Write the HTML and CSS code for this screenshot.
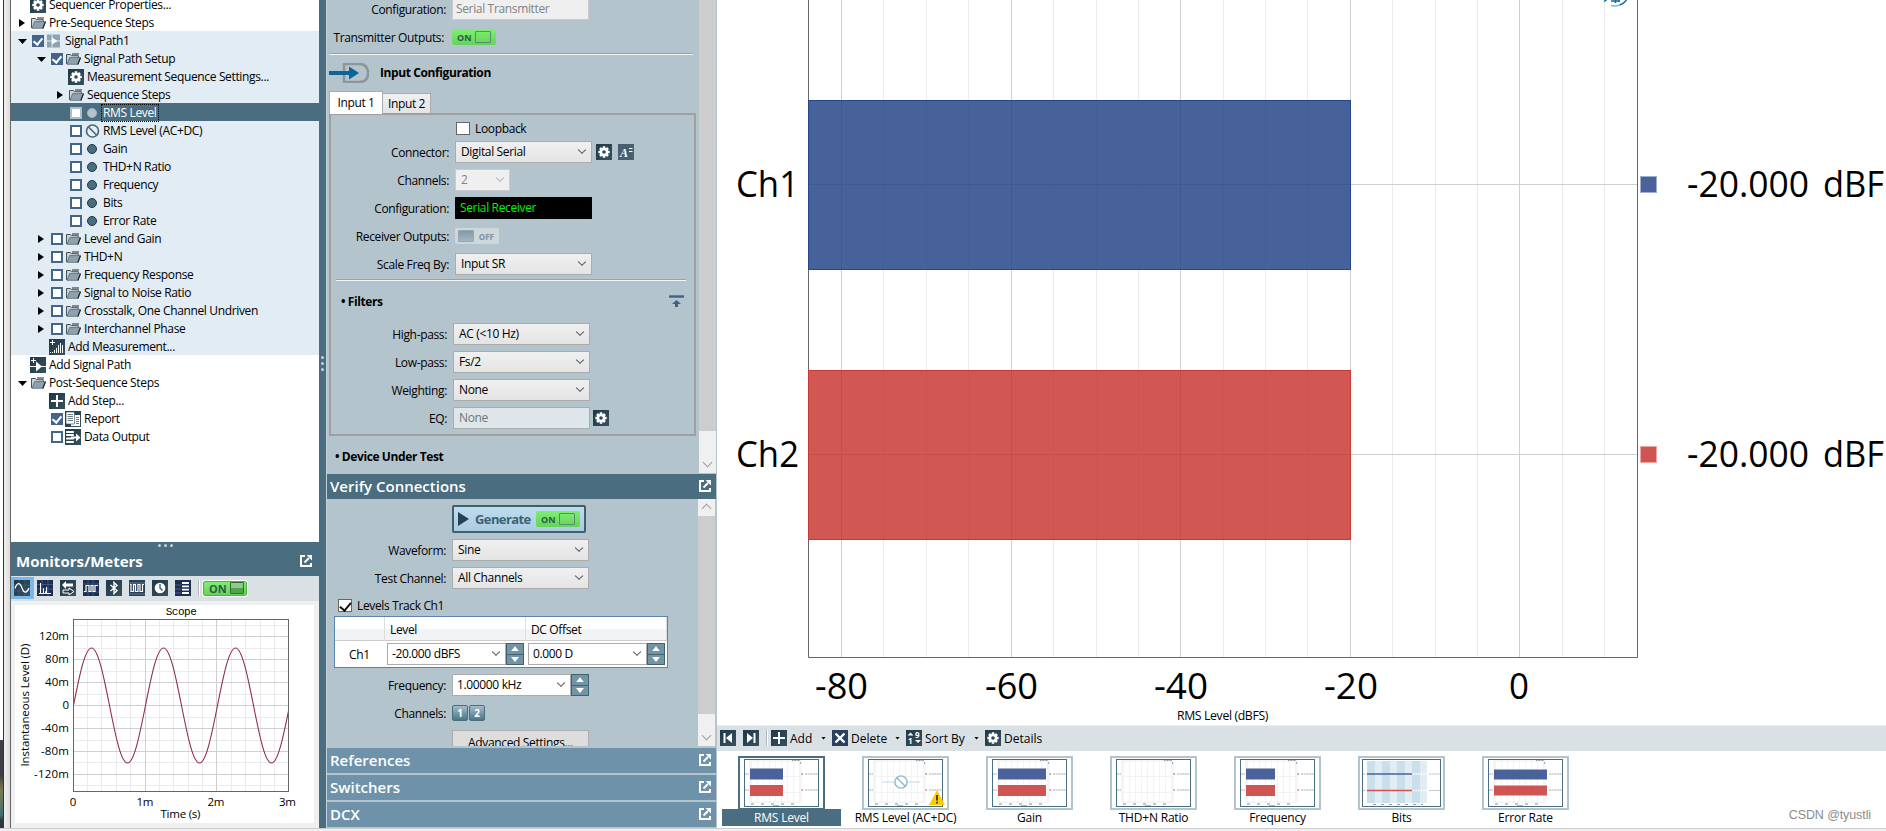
FILE: index.html
```html
<!DOCTYPE html>
<html lang="en">
<head>
    <meta charset="UTF-8">
    <meta name="viewport" content="width=device-width, initial-scale=1.0">
    <title>Sequence Mode - RMS Level</title>
    <link rel="stylesheet" href="styles.css">
</head>
<body>
    <!-- icon sprites -->
    <svg class="sprites" width="0" height="0">
        <linearGradient id="tile" x1="0" y1="0" x2="1" y2="1">
            <stop offset="0" stop-color="#1f3849"/>
            <stop offset="1" stop-color="#38515f"/>
        </linearGradient>
        <symbol id="gear" viewBox="0 0 16 16">
            <rect width="16" height="16" fill="url(#tile)"/>
            <g stroke="#fff" stroke-width="2.6">
                <path d="M8 2.3v11.4M2.3 8h11.4M4 4l8 8M12 4l-8 8"/>
            </g>
            <circle cx="8" cy="8" r="4.3" fill="#fff"/>
            <circle cx="8" cy="8" r="1.8" fill="#2c4656"/>
        </symbol>
        <symbol id="folder" viewBox="0 0 16 16">
            <path d="M1.5 13V3.5h4l1 1.2h6.8V7" fill="#c8d2d8" stroke="#47525a"/>
            <path d="M2 13.3L4.6 6.6h10.9l-2.6 6.7z" fill="#8da1ae" stroke="#5b6b76" stroke-width=".8"/>
            <path d="M7 3h7M12.8 13.5l2.7-6.8" stroke="#222" stroke-width="1.2"/>
        </symbol>
        <symbol id="path" viewBox="0 0 16 16">
            <rect x="1" y="1.5" width="13" height="13" fill="#8ea3b2"/>
            <path d="M1 8h13M6 1.5v13" stroke="#dfe8ee"/>
            <path d="M6 4.5l5.500 3.500L6 11.500z" fill="#fff"/>
        </symbol>
        <symbol id="none" viewBox="0 0 16 16">
            <circle cx="8.500" cy="8" r="6" fill="#e9f0f5" stroke="#4a6a80" stroke-width="1.700"/>
            <path d="M4.500 4l8 8" stroke="#4a6a80" stroke-width="1.700"/>
        </symbol>
        <symbol id="addmeas" viewBox="0 0 16 16">
            <rect width="16" height="16" fill="url(#tile)"/>
            <path d="M3.500 1v5M1 3.500h5M1.500 13v1M3.500 13v1M5.500 11v3M7.500 9v5M9.500 6v8M11.500 4v10M13.500 6v8" stroke="#fff"/>
        </symbol>
        <symbol id="addpath" viewBox="0 0 16 16">
            <rect width="16" height="16" fill="url(#tile)"/>
            <path d="M3.500 1v5M1 3.500h5M0 9.500h16" stroke="#fff"/>
            <path d="M6 4.500l6 5-6 5z" fill="#fff"/>
        </symbol>
        <symbol id="plus" viewBox="0 0 16 16">
            <rect width="16" height="16" fill="url(#tile)"/>
            <path d="M8 2v12M2 8h12" stroke="#fff" stroke-width="2"/>
        </symbol>
        <symbol id="report" viewBox="0 0 16 16">
            <rect width="16" height="16" fill="url(#tile)"/>
            <path d="M9 4h6v11H6v-2" fill="#fff"/>
            <path d="M1 1h8.500v12H1z" fill="#fff" stroke="#2b4454" stroke-width=".6"/>
            <path d="M2.500 3.500H8M2.500 5.500H8M2.500 7.500H8M2.500 9.500H8M11 6.500h3M11 8.500h3M11 10.500h3M11 12.500h3" stroke="#6a7d88"/>
        </symbol>
        <symbol id="dataout" viewBox="0 0 16 16">
            <rect width="16" height="16" fill="url(#tile)"/>
            <path d="M2 3h6M2 6h6M2 9.500h6M2 13h6" stroke="#fff" stroke-width="2.200" stroke-linecap="round"/>
            <path d="M6 8.500h6" stroke="#fff" stroke-width="2"/>
            <path d="M11 4.500l4.500 4-4.500 4z" fill="#fff"/>
        </symbol>
        <symbol id="popout" viewBox="0 0 12 12">
            <path d="M5 1H1v10h10V8" fill="none" stroke="#fff" stroke-width="2"/>
            <path d="M4.500 7.500L9 3" stroke="#fff" stroke-width="2"/>
            <path d="M6.500 0H12v5.500z" fill="#fff"/>
        </symbol>
        <symbol id="none-lg" viewBox="0 0 16 16">
            <circle cx="8" cy="8" r="6.500" fill="none" stroke="#8cb8d2" stroke-width="1.500"/>
            <path d="M3.500 3.500l9 9" stroke="#8cb8d2" stroke-width="1.500"/>
        </symbol>
        <pattern id="minigrid" width="6" height="16" patternUnits="userSpaceOnUse">
            <path d="M0 .5h6M.5 0v16" stroke="#f3f3f3" stroke-width="1"/>
        </pattern>
        <!-- empty chart used as base of every thumbnail -->
        <symbol id="thumbbase" viewBox="0 0 73 46">
            <rect x="5" y="1" width="51" height="41" fill="url(#minigrid)" stroke="#ececec"/>
            <path d="M0 14h4M0 30h4M60 14h13M60 30h13" stroke="#aaa" stroke-dasharray="2 .6"/>
            <path d="M47 .5h8" stroke="#999" stroke-dasharray="1 .5"/>
            <path d="M55.500 2v2" stroke="#7db2d4"/>
            <path d="M56.500 14h1.500" stroke="#2a4a8a"/>
            <path d="M56.500 30h1.500" stroke="#c33"/>
            <path d="M6 44h45" stroke="#888" stroke-dasharray="3 7"/>
            <path d="M28 45.500h6" stroke="#bbb"/>
        </symbol>
    </svg>

    <div class="window">
        <div class="edge"><div class="edge-dark"></div></div>

        <div class="left-panel">
            <div class="tree">
                <div class="row"><i class="arrow"></i><svg class="icon"><use href="#gear"/></svg><span>Sequencer Properties...</span></div>
                <div class="row"><i class="arrow closed"></i><svg class="icon"><use href="#folder"/></svg><span>Pre-Sequence Steps</span></div>
                <div class="row path"><i class="arrow open"></i><i class="check on"></i><svg class="icon"><use href="#path"/></svg><span>Signal Path1</span></div>
                <div class="row path lvl1"><i class="arrow open"></i><i class="check on"></i><svg class="icon"><use href="#folder"/></svg><span>Signal Path Setup</span></div>
                <div class="row path lvl2"><i class="arrow"></i><svg class="icon"><use href="#gear"/></svg><span>Measurement Sequence Settings...</span></div>
                <div class="row path lvl2"><i class="arrow closed"></i><svg class="icon"><use href="#folder"/></svg><span>Sequence Steps</span></div>
                <div class="row selected lvl2"><i class="arrow"></i><i class="check"></i><i class="dot"></i><span>RMS Level</span></div>
                <div class="row path lvl2"><i class="arrow"></i><i class="check"></i><svg class="icon"><use href="#none"/></svg><span>RMS Level (AC+DC)</span></div>
                <div class="row path lvl2"><i class="arrow"></i><i class="check"></i><i class="dot"></i><span>Gain</span></div>
                <div class="row path lvl2"><i class="arrow"></i><i class="check"></i><i class="dot"></i><span>THD+N Ratio</span></div>
                <div class="row path lvl2"><i class="arrow"></i><i class="check"></i><i class="dot"></i><span>Frequency</span></div>
                <div class="row path lvl2"><i class="arrow"></i><i class="check"></i><i class="dot"></i><span>Bits</span></div>
                <div class="row path lvl2"><i class="arrow"></i><i class="check"></i><i class="dot"></i><span>Error Rate</span></div>
                <div class="row path lvl1"><i class="arrow closed"></i><i class="check"></i><svg class="icon"><use href="#folder"/></svg><span>Level and Gain</span></div>
                <div class="row path lvl1"><i class="arrow closed"></i><i class="check"></i><svg class="icon"><use href="#folder"/></svg><span>THD+N</span></div>
                <div class="row path lvl1"><i class="arrow closed"></i><i class="check"></i><svg class="icon"><use href="#folder"/></svg><span>Frequency Response</span></div>
                <div class="row path lvl1"><i class="arrow closed"></i><i class="check"></i><svg class="icon"><use href="#folder"/></svg><span>Signal to Noise Ratio</span></div>
                <div class="row path lvl1"><i class="arrow closed"></i><i class="check"></i><svg class="icon"><use href="#folder"/></svg><span>Crosstalk, One Channel Undriven</span></div>
                <div class="row path lvl1"><i class="arrow closed"></i><i class="check"></i><svg class="icon"><use href="#folder"/></svg><span>Interchannel Phase</span></div>
                <div class="row path lvl1"><i class="arrow"></i><svg class="icon"><use href="#addmeas"/></svg><span>Add Measurement...</span></div>
                <div class="row"><i class="arrow"></i><svg class="icon"><use href="#addpath"/></svg><span>Add Signal Path</span></div>
                <div class="row"><i class="arrow open"></i><svg class="icon"><use href="#folder"/></svg><span>Post-Sequence Steps</span></div>
                <div class="row lvl1"><i class="arrow"></i><svg class="icon"><use href="#plus"/></svg><span>Add Step...</span></div>
                <div class="row lvl1"><i class="arrow"></i><i class="check on"></i><svg class="icon"><use href="#report"/></svg><span>Report</span></div>
                <div class="row lvl1"><i class="arrow"></i><i class="check"></i><svg class="icon"><use href="#dataout"/></svg><span>Data Output</span></div>
            </div>

            <div class="monitors-head">
                <div class="grip"><i></i><i></i><i></i></div>
                <div class="head-line"><h2>Monitors/Meters</h2><svg class="pop"><use href="#popout"/></svg></div>
            </div>
            <div class="monitor-tools">
                <div class="tool active"><svg class="icon" viewBox="0 0 16 16"><rect width="16" height="16" fill="url(#tile)"/><path d="M0 5h16M0 11h16M5 0v16M11 0v16" stroke="#3f5b78" stroke-width=".7"/><path d="M1 8.500C3 2 6 2 8 8s5 5 7 0" fill="none" stroke="#fff" stroke-width="1.300"/></svg></div>
                <div class="tool"><svg class="icon" viewBox="0 0 16 16"><rect width="16" height="16" fill="#1c2f50"/><path d="M0 4.500h16M0 9h16M5 0v16M11 0v16" stroke="#4a608c" stroke-width=".8"/><path d="M2 13.500h1.500V3v10.500h3v-5v5h2v-2l1 2V7v6.500H14" fill="none" stroke="#fff"/></svg></div>
                <div class="tool"><svg class="icon" viewBox="0 0 16 16"><rect width="16" height="16" fill="url(#tile)"/><path d="M5 5h8" stroke="#fff" stroke-width="3"/><path d="M6 1v8L2 5z" fill="#fff"/><path d="M3 10h6V8l5 3.500L9 15v-2H3z" fill="#253e4e" stroke="#fff"/></svg></div>
                <div class="tool"><svg class="icon" viewBox="0 0 16 16"><rect width="16" height="16" fill="#1c2f50"/><path d="M0 4h16M0 12h16M5 0v16M10 0v16" stroke="#4a608c" stroke-width=".7"/><path d="M1 11.500h2v-6h3v6h2v-6h2v6h2v-6h3" fill="none" stroke="#fff" stroke-width="1.200"/></svg></div>
                <div class="tool"><svg class="icon" viewBox="0 0 16 16"><rect width="16" height="16" fill="url(#tile)"/><path d="M4.500 5l6.500 5.500L8 13.500v-11l3 3L4.500 11" fill="none" stroke="#fff" stroke-width="1.400"/></svg></div>
                <div class="tool"><svg class="icon" viewBox="0 0 16 16"><rect width="16" height="16" fill="#24415a"/><path d="M0 3h16M0 14h16" stroke="#88a" stroke-width=".7"/><path d="M1 4.500h1v7h2.500v-7h2v7H9v-7h2v7h2.500v-7H15" fill="none" stroke="#fff" stroke-width="1.200"/></svg></div>
                <div class="tool"><svg class="icon" viewBox="0 0 16 16"><rect width="16" height="16" fill="url(#tile)"/><circle cx="8" cy="8" r="5.300" fill="#fff"/><path d="M8 4v4l2.500 2.500" fill="none" stroke="#2b4454" stroke-width="1.200"/></svg></div>
                <div class="tool"><svg class="icon" viewBox="0 0 16 16"><rect width="16" height="16" fill="#1c2f50"/><path d="M0 5h6M0 9h6M0 13h6" stroke="#4a608c"/><path d="M7 3h7M7 6.300h7M7 9.600h7M7 13h7" stroke="#fff" stroke-width="1.800"/></svg></div>
                <i class="sep"></i>
                <div class="toggle glossy">ON<i></i></div>
            </div>
            <div class="scope">
                <svg width="299" height="218" viewBox="15 605 299 218">
                    <rect x="15" y="605" width="299" height="218" fill="#fff"/>
                    <path class="minor" d="M87.500 620v171M101.500 620v171M116.500 620v171M130.500 620v171M159.500 620v171M173.500 620v171M188.500 620v171M202.500 620v171M231.500 620v171M245.500 620v171M260.500 620v171M274.500 620v171M74 625.500h214M74 648.500h214M74 671.500h214M74 694.500h214M74 717.500h214M74 740.500h214M74 762.500h214M74 785.500h214"/>
                    <path class="major" d="M145.500 620v171M216.500 620v171M74 636.500h214M74 659.500h214M74 682.500h214M74 705.500h214M74 728.500h214M74 751.500h214M74 774.500h214"/>
                    <svg x="73" y="620" width="215" height="171" viewBox="0 0 215 171">
                        <path class="sine" d="M.5 85.500
                            c5.870-29.460 11.490-57.500 18-57.500c6.510 0 12.130 28.040 18 57.500c5.870 29.460 11.490 57.500 18 57.500c6.510 0 12.130-28.040 18-57.500
                            c5.870-29.460 11.490-57.500 18-57.500c6.510 0 12.130 28.040 18 57.500c5.870 29.460 11.490 57.500 18 57.500c6.510 0 12.130-28.040 18-57.500
                            c5.870-29.460 11.490-57.500 18-57.500c6.510 0 12.130 28.040 18 57.500c5.870 29.460 11.490 57.500 18 57.500c6.510 0 12.130-28.040 17-52"/>
                    </svg>
                    <rect x="73.500" y="619.500" width="215" height="172" fill="none" stroke="#666"/>
                    <text class="scope-title" x="181" y="615" text-anchor="middle">Scope</text>
                    <g class="scope-text" text-anchor="end">
                        <text x="69" y="639.500" textLength="30">120m</text>
                        <text x="69" y="662.500" textLength="24">80m</text>
                        <text x="69" y="685.500" textLength="24">40m</text>
                        <text x="69" y="708.500">0</text>
                        <text x="69" y="731.500" textLength="28">-40m</text>
                        <text x="69" y="754.500" textLength="28">-80m</text>
                        <text x="69" y="777.500" textLength="35">-120m</text>
                    </g>
                    <g class="scope-text" text-anchor="middle">
                        <text x="73" y="806">0</text>
                        <text x="145" y="806" textLength="17">1m</text>
                        <text x="216" y="806" textLength="17">2m</text>
                        <text x="287.500" y="806" textLength="17">3m</text>
                        <text x="180.500" y="817.500" textLength="40">Time (s)</text>
                        <text transform="translate(29 705) rotate(-90)" textLength="123">Instantaneous Level (D)</text>
                    </g>
                </svg>
            </div>
        </div>

        <div class="splitter"><i></i><i></i><i></i></div>

        <div class="mid-panel">
            <div class="pane top-pane">
                <div class="pane-body">
                    <div class="field first"><label>Configuration:</label><div class="input disabled">Serial Transmitter</div></div>
                    <div class="field"><label class="near">Transmitter Outputs:</label><div class="toggle">ON<i></i></div></div>
                    <div class="divider"></div>
                    <div class="section-head">
                        <svg width="40" height="20" viewBox="0 0 40 20"><path d="M15 1h15q9 0 9 9t-9 9H15z" fill="none" stroke="#8f969b" stroke-width="2.500"/><path d="M0 10h24" stroke="#0d6496" stroke-width="4"/><path d="M20 3.500l10 6.500-10 6.500z" fill="#0d6496"/></svg>
                        <b>Input Configuration</b>
                    </div>
                    <div class="tabs"><div class="tab active">Input 1</div><div class="tab">Input 2</div></div>
                    <div class="tab-page">
                        <div class="field loopback"><label></label><i class="box"></i><span>Loopback</span></div>
                        <div class="field"><label>Connector:</label><div class="select">Digital Serial</div><svg class="icon light"><use href="#gear"/></svg><svg class="icon light second" viewBox="0 0 16 16"><rect width="16" height="16" fill="#475f6e"/><text class="a-glyph" x="2" y="12.500">A</text><path d="M11 4.500h3.500M11 7.500h3.500" stroke="#fff"/></svg></div>
                        <div class="field"><label>Channels:</label><div class="select small disabled">2</div></div>
                        <div class="field"><label>Configuration:</label><div class="input lcd">Serial Receiver</div></div>
                        <div class="field"><label>Receiver Outputs:</label><div class="toggle off"><i></i>OFF</div></div>
                        <div class="field"><label>Scale Freq By:</label><div class="select">Input SR</div></div>
                        <div class="divider inner"></div>
                        <div class="filters-head"><b>• Filters</b><svg width="15" height="12" viewBox="0 0 15 12"><path d="M0 1.500h15" stroke="#3f618a" stroke-width="2.400"/><path d="M7.500 5l4.500 4H9v3H6V9H3z" fill="#3f618a"/></svg></div>
                        <div class="filters">
                            <div class="field"><label>High-pass:</label><div class="select">AC (&lt;10 Hz)</div></div>
                            <div class="field"><label>Low-pass:</label><div class="select">Fs/2</div></div>
                            <div class="field"><label>Weighting:</label><div class="select">None</div></div>
                            <div class="field"><label>EQ:</label><div class="input faded">None</div><svg class="icon light"><use href="#gear"/></svg></div>
                        </div>
                    </div>
                    <div class="dut"><b>• Device Under Test</b></div>
                </div>
                <div class="scrollbar"><div class="thumb"></div><div class="sb-end down"></div></div>
            </div>

            <div class="bar dark"><h2>Verify Connections</h2><svg class="pop"><use href="#popout"/></svg></div>

            <div class="pane verify-pane">
                <div class="pane-body">
                    <div class="generate-row"><div class="generate"><i class="play"></i><b>Generate</b><div class="toggle">ON<i></i></div></div></div>
                    <div class="field"><label>Waveform:</label><div class="select">Sine</div></div>
                    <div class="field"><label>Test Channel:</label><div class="select">All Channels</div></div>
                    <div class="track-row"><i class="box checked"></i><span>Levels Track Ch1</span></div>
                    <div class="levels">
                        <div class="th"></div><div class="th">Level</div><div class="th">DC Offset</div>
                        <div class="td name">Ch1</div>
                        <div class="td"><div class="spin-input">-20.000 dBFS</div><div class="spin"><i></i><i></i></div></div>
                        <div class="td"><div class="spin-input">0.000 D</div><div class="spin"><i></i><i></i></div></div>
                    </div>
                    <div class="field"><label>Frequency:</label><div class="spin-input">1.00000 kHz</div><div class="spin"><i></i><i></i></div></div>
                    <div class="field"><label>Channels:</label><div class="ch-btn">1</div><div class="ch-btn">2</div></div>
                    <div class="field"><label></label><div class="adv-btn">Advanced Settings...</div></div>
                </div>
                <div class="scrollbar"><div class="sb-end up"></div><div class="thumb"></div><div class="sb-end down"></div></div>
            </div>

            <div class="bar"><h2>References</h2><svg class="pop"><use href="#popout"/></svg></div>
            <div class="bar"><h2>Switchers</h2><svg class="pop"><use href="#popout"/></svg></div>
            <div class="bar"><h2>DCX</h2><svg class="pop"><use href="#popout"/></svg></div>
        </div>

        <div class="right-panel">
            <svg class="chart" width="1169" height="725" viewBox="717 0 1169 725">
                <path class="minor" d="M883.500 0v657M926.500 0v657M968.500 0v657M1053.500 0v657M1096.500 0v657M1138.500 0v657M1223.500 0v657M1265.500 0v657M1307.500 0v657M1392.500 0v657M1435.500 0v657M1477.500 0v657M1562.500 0v657M1604.500 0v657"/>
                <path class="major" d="M841.500 0v657M1011.500 0v657M1180.500 0v657M1350.500 0v657M1519.500 0v657M809 184.500h828M809 454.500h828"/>
                <path d="M808.500 0v657.500h829V0" fill="none" stroke="#666"/>
                <rect x="808.500" y="100.500" width="542" height="169" fill="#1f4084" fill-opacity=".82" stroke="#26468a"/>
                <rect x="808.500" y="370.500" width="542" height="169" fill="#c62d28" fill-opacity=".8" stroke="#c83a36"/>
                <rect x="1640.500" y="176.500" width="16" height="16" fill="#49629a" stroke="#a0aed0"/>
                <rect x="1640.500" y="446.500" width="16" height="16" fill="#d05552" stroke="#e8a6a4"/>
                <g fill="none" stroke="#0f6ca3" stroke-width="1.500">
                    <path d="M1604 1.500l3-2M1611 1h9M1615.500 0v3M1619 0v2M1626.500 0q-3 4-7 5"/>
                    <path d="M1611 5.500q5 1 9-.5" stroke="#7db8dc"/>
                </g>
                <g class="big">
                    <text x="736" y="197" textLength="63" lengthAdjust="spacingAndGlyphs">Ch1</text>
                    <text x="736" y="467" textLength="63" lengthAdjust="spacingAndGlyphs">Ch2</text>
                    <text x="815" y="699" textLength="53" lengthAdjust="spacingAndGlyphs">-80</text>
                    <text x="985" y="699" textLength="53" lengthAdjust="spacingAndGlyphs">-60</text>
                    <text x="1154" y="699" textLength="54" lengthAdjust="spacingAndGlyphs">-40</text>
                    <text x="1324" y="699" textLength="54" lengthAdjust="spacingAndGlyphs">-20</text>
                    <text x="1509" y="699" textLength="20" lengthAdjust="spacingAndGlyphs">0</text>
                    <text x="1687" y="197" textLength="122" lengthAdjust="spacingAndGlyphs">-20.000</text>
                    <text x="1823" y="197" textLength="61" lengthAdjust="spacingAndGlyphs">dBF</text>
                    <text x="1687" y="467" textLength="122" lengthAdjust="spacingAndGlyphs">-20.000</text>
                    <text x="1823" y="467" textLength="61" lengthAdjust="spacingAndGlyphs">dBF</text>
                </g>
                <text class="axis-title" x="1177" y="720" textLength="91" lengthAdjust="spacingAndGlyphs">RMS Level (dBFS)</text>
            </svg>

            <div class="result-tools">
                <svg class="icon" viewBox="0 0 16 16"><rect width="16" height="16" fill="url(#tile)"/><path d="M4.500 3v10" stroke="#fff" stroke-width="2"/><path d="M12 3v10L6 8z" fill="#fff"/></svg>
                <svg class="icon next" viewBox="0 0 16 16"><rect width="16" height="16" fill="url(#tile)"/><path d="M11.500 3v10" stroke="#fff" stroke-width="2"/><path d="M4 3v10l6-5z" fill="#fff"/></svg>
                <i class="sep"></i>
                <div class="cmd add"><svg class="icon"><use href="#plus"/></svg><span>Add</span><i class="caret"></i></div>
                <div class="cmd delete"><svg class="icon" viewBox="0 0 16 16"><rect width="16" height="16" fill="#2a4060"/><path d="M3.500 3.500l9 9M12.500 3.500l-9 9" stroke="#fff" stroke-width="2.400"/></svg><span>Delete</span><i class="caret"></i></div>
                <div class="cmd sort"><svg class="icon" viewBox="0 0 16 16"><rect width="16" height="16" fill="url(#tile)"/><text class="num-glyph" x="2" y="14">1</text><text class="num-glyph" x="9" y="8">9</text><path d="M1.500 5.500l3-3 3 3zM9 10h6l-3 3z" fill="#fff"/></svg><span>Sort By</span><i class="caret"></i></div>
                <div class="cmd"><svg class="icon"><use href="#gear"/></svg><span>Details</span></div>
            </div>

            <div class="thumbs">
                <div class="thumb-item selected">
                    <div class="frame"><svg viewBox="0 0 73 46"><use href="#thumbbase"/><rect x="5" y="8.500" width="33" height="11" fill="#49629a"/><rect x="5" y="25" width="33" height="11" fill="#d05552"/></svg></div>
                    <span>RMS Level</span>
                </div>
                <div class="thumb-item">
                    <div class="frame"><svg viewBox="0 0 73 46"><use href="#thumbbase"/><path d="M13 22h38" stroke="#c5dbe6"/><circle cx="32" cy="22" r="6" fill="#fff"/><use href="#none-lg" x="24.500" y="14.500" width="15" height="15"/></svg></div>
                    <svg class="warn" viewBox="0 0 16 15"><path d="M8 0l8 15H0z" fill="#fc0"/><path d="M8 5v5.500M8 11.800v1.700" stroke="#222" stroke-width="1.600"/></svg>
                    <span>RMS Level (AC+DC)</span>
                </div>
                <div class="thumb-item">
                    <div class="frame"><svg viewBox="0 0 73 46"><use href="#thumbbase"/><rect x="5" y="8.500" width="48" height="11" fill="#49629a"/><rect x="5" y="25" width="48" height="11" fill="#d05552"/></svg></div>
                    <span>Gain</span>
                </div>
                <div class="thumb-item">
                    <div class="frame"><svg viewBox="0 0 73 46"><use href="#thumbbase"/></svg></div>
                    <span>THD+N Ratio</span>
                </div>
                <div class="thumb-item">
                    <div class="frame"><svg viewBox="0 0 73 46"><use href="#thumbbase"/><rect x="5" y="8.500" width="29" height="11" fill="#49629a"/><rect x="5" y="25" width="29" height="11" fill="#d05552"/></svg></div>
                    <span>Frequency</span>
                </div>
                <div class="thumb-item bits">
                    <div class="frame"><svg viewBox="0 0 77 46"><rect x="4" y="1" width="60" height="42" fill="#e1ecf3"/><path d="M8 1v42M23 1v42M38 1v42M53 1v42" stroke="#c9dfeb" stroke-width="8"/><path d="M4 14h45" stroke="#49629a" stroke-width="1.500"/><path d="M4 30.500h45" stroke="#d05552" stroke-width="1.500"/><path d="M50 14h15M50 30.500h15" stroke="#fff" stroke-width="1.500" stroke-dasharray="1.500 1"/><path d="M66 14h11M66 30.500h11M0 14h3M0 30.500h3" stroke="#bbb" stroke-dasharray="2 .6"/><path d="M10 44.500h50" stroke="#999" stroke-dasharray="3 5"/></svg></div>
                    <span>Bits</span>
                </div>
                <div class="thumb-item">
                    <div class="frame"><svg viewBox="0 0 73 46"><use href="#thumbbase"/><rect x="5" y="9.500" width="53" height="10" fill="#49629a"/><rect x="5" y="25.500" width="53" height="10" fill="#d05552"/></svg></div>
                    <span>Error Rate</span>
                </div>
                <div class="watermark">CSDN @tyustli</div>
            </div>
        </div>
    </div>
</body>
</html>
```
FILE: styles.css
```css
:root {
    --teal: #4a6d80;
    --bar: #6e92aa;
    --panel: #b4c4cc;
    --tint: #e1ecf4;
    --tools: #dae1e5;
}

* {
    margin: 0;
    padding: 0;
    box-sizing: border-box;
}

body {
    font-family: "Open Sans", "Noto Sans", sans-serif;
    font-size: 12px;
    letter-spacing: -0.35px;
    color: #000;
    background: #f0f0f0;
    height: 831px;
    overflow: hidden;
}

i {
    font-style: normal;
}

svg {
    display: block;
    flex: none;
}

.sprites {
    position: absolute;
}

.icon {
    width: 16px;
    height: 16px;
}

.window {
    display: flex;
    width: 1886px;
    height: 829px;
    border-bottom: 1px solid #ccc;
}

.edge {
    width: 11px;
    background: linear-gradient(90deg, #fff 3px, #333 3px, #333 4px, #f0f0f0 4px, #dcdcdc 10px, #666 10px);
    display: flex;
    align-items: flex-end;
}

.edge-dark {
    width: 3px;
    height: 88px;
    background: linear-gradient(#3c3f48 35px, #7b7a4d 50px, #3f6f6e 75px, #33363e 80px);
}

/* left panel */
.left-panel {
    width: 308px;
    display: flex;
    flex-direction: column;
    background: #f0f0f0;
}

.tree {
    height: 542px;
    background: #fff;
    overflow: hidden;
}

.row {
    display: flex;
    align-items: center;
    height: 18px;
    padding: 2px 0 0 4px;
    white-space: nowrap;
}

.row:first-child {
    margin-top: -5px;
}

.row.lvl1 { padding-left: 23px; }
.row.lvl2 { padding-left: 42px; }
.row.path { background: var(--tint); }

.row span {
    margin-left: 2px;
    padding: 0 1px;
    line-height: 16px;
}

.row.selected {
    background: var(--teal);
    color: #fff;
}

.row.selected span {
    outline: 1px dotted #000;
}

.arrow {
    width: 15px;
    height: 8px;
    flex: none;
}

.arrow.closed {
    background: #000;
    clip-path: polygon(4px 0, 10px 4px, 4px 8px);
}

.arrow.open {
    background: #000;
    clip-path: polygon(3px 2px, 12px 2px, 7.5px 7px);
}

.check {
    width: 12px;
    height: 12px;
    margin: 0 2px;
    border: 2px solid #44658a;
    background: #fff;
    flex: none;
}

.check.on {
    background: #44658a;
    display: flex;
    align-items: center;
    justify-content: center;
}

.check.on::after {
    content: "";
    width: 4px;
    height: 7px;
    flex: none;
    border: solid #fff;
    border-width: 0 2px 2px 0;
    transform: translateY(-1px) rotate(40deg);
}

.selected .check {
    border-color: #aebfca;
}

.dot {
    width: 10px;
    height: 10px;
    margin: 0 3px;
    border-radius: 50%;
    background: var(--teal);
    border: 1px solid #26353f;
    flex: none;
}

.selected .dot {
    background: #b4c4cc;
    border-color: #a5b8c2;
}

h2 {
    color: #fff;
    font-size: 15px;
    letter-spacing: 0;
    line-height: 24px;
    font-weight: 600;
}

.monitors-head {
    height: 34px;
    background: var(--teal);
}

.monitors-head h2 {
    font-weight: 700;
}

.grip {
    display: flex;
    justify-content: center;
    gap: 3px;
    padding-top: 2px;
}

.grip i,
.splitter i {
    width: 3px;
    height: 3px;
    border-radius: 50%;
    background: #c3d0d8;
}

.head-line {
    display: flex;
    justify-content: space-between;
    align-items: center;
    padding: 2px 7px 0 5px;
}

.pop {
    width: 12px;
    height: 12px;
}

.monitor-tools {
    display: flex;
    height: 25px;
    background: var(--tools);
    align-items: center;
    padding-bottom: 1px;
}

.tool {
    width: 23px;
    height: 22px;
    padding-left: 3px;
    display: flex;
    align-items: center;
}

.tool.active {
    background: #7ab8ea;
}

.sep {
    width: 2px;
    height: 16px;
    border-left: 1px solid #b0b8bc;
    border-right: 1px solid #fff;
}

.monitor-tools .sep {
    margin: 0 3px;
}

.toggle {
    display: flex;
    align-items: center;
    justify-content: space-between;
    width: 44px;
    height: 16px;
    padding: 0 5px;
    border-radius: 2px;
    background: linear-gradient(#7df070, #66d25c);
    color: #2f5a4a;
    font-size: 9px;
    font-weight: 700;
    letter-spacing: 0;
    flex: none;
}

.toggle i {
    width: 16px;
    height: 12px;
    border: 1px solid #5a8a70;
    border-radius: 1px;
}

.toggle.glossy {
    font-size: 11px;
    height: 15px;
    padding: 0 2px 0 5px;
    outline: 1px solid #fff;
    border: 1px solid #4fae46;
}

.toggle.glossy i {
    width: 14px;
    background: linear-gradient(#8ecb88 50%, #4fa548 50%);
    border-color: #2f6a3a;
}

.toggle.off {
    background: #cdd7dc;
    color: #7d929f;
    padding: 0 5px 0 3px;
    font-size: 8px;
}

.toggle.off i {
    background: linear-gradient(#8299a6, #a5b7c1);
    border-color: #94a8b3;
}

.scope {
    padding: 4px 0 0 4px;
}

.minor {
    fill: none;
    stroke: #ebebeb;
}

.major {
    fill: none;
    stroke: #cfcfcf;
}

.sine {
    fill: none;
    stroke: #8f3047;
    stroke-width: 1.1;
}

.scope-title {
    font: 11px "Liberation Mono", monospace;
    letter-spacing: -0.5px;
}

.scope-text {
    font-size: 11.5px;
    letter-spacing: 0;
}

.splitter {
    width: 8px;
    background: linear-gradient(90deg, var(--teal) 7px, #c5d1d8 7px);
    display: flex;
    flex-direction: column;
    gap: 3px;
    padding: 356px 0 0 2px;
}

/* middle panel */
.mid-panel {
    width: 390px;
    background: var(--panel);
    border-right: 1px solid #b4c4cc;
    display: flex;
    flex-direction: column;
}

.pane {
    display: flex;
    overflow: hidden;
    flex: none;
}

.top-pane { height: 473px; }

.verify-pane {
    height: 247px;
}

.pane-body {
    flex: 1;
    white-space: nowrap;
}

.field {
    display: flex;
    align-items: center;
    height: 22px;
    margin-bottom: 6px;
}

.field.first { margin-top: -2px; }

.field label {
    width: 119px;
    margin-right: 6px;
    text-align: right;
    flex: none;
}

.field label.near {
    width: 117px;
    margin-right: 8px;
}

.input,
.select {
    width: 137px;
    height: 22px;
    border: 1px solid #acacac;
    line-height: 20px;
    padding-left: 5px;
    background: linear-gradient(#f0f0f0, #e4e4e4);
}

.select {
    display: flex;
    justify-content: space-between;
    padding-right: 6px;
}

.select::after,
.spin-input::after {
    content: "";
    width: 5px;
    height: 5px;
    margin-top: 5px;
    border: solid #555;
    border-width: 0 1.5px 1.5px 0;
    transform: scaleY(.9) rotate(45deg);
}

.disabled {
    color: #838383;
    background: #efefef;
    border-color: #c6ccd0;
    padding-left: 3px;
}

.select.small {
    width: 55px;
    padding-left: 5px;
}

.select.disabled::after {
    border-color: #b5b5b5;
}

.lcd {
    background: #000;
    border-color: #000;
    color: #00f500;
    padding-left: 4px;
}

.faded {
    background: #dee6ea;
    color: #6d7478;
}

.divider {
    width: 364px;
    height: 2px;
    margin: -1px 0 0 2px;
    border-top: 1px solid #a0a0a0;
    border-bottom: 1px solid #f4f4f4;
}

.divider.inner {
    width: 350px;
    margin: -2px 0 0 5px;
}

.section-head {
    height: 36px;
    display: flex;
    align-items: center;
    padding: 0 0 1px 2px;
    gap: 11px;
}

b {
    font-weight: 700;
    letter-spacing: -0.4px;
}

.tabs {
    display: flex;
    align-items: flex-end;
    height: 22px;
    padding-left: 2px;
}

.tab {
    width: 48px;
    height: 20px;
    line-height: 20px;
    text-align: center;
    border: 1px solid #acacac;
    border-left: 0;
    border-bottom: 0;
    background: linear-gradient(#f0f0f0, #e4e4e4);
}

.tab.active {
    width: 54px;
    height: 23px;
    margin-bottom: -1px;
    line-height: 22px;
    border-left: 1px solid #acacac;
    background: #fff;
}

.tab-page {
    width: 367px;
    height: 323px;
    margin-left: 2px;
    border: 2px solid #a0a0a0;
}

.tab-page .field label { width: 118px; }
.tab-page .filters .field label { width: 116px; }

.field.loopback {
    height: 26px;
    margin: 0;
}

.box {
    width: 14px;
    height: 13px;
    margin: 0 5px 0 1px;
    border: 1px solid #666;
    background: #fff;
    flex: none;
}

.box.checked {
    display: flex;
    justify-content: center;
}

.box.checked::after {
    content: "";
    width: 5px;
    height: 9px;
    border: solid #111;
    border-width: 0 2px 2px 0;
    transform: rotate(40deg);
}

.light {
    margin-left: 4px;
}

.light.second {
    margin-left: 6px;
}

.filters .light { margin-left: 3px; }

.a-glyph {
    font: italic bold 12px "Liberation Serif", serif;
    fill: #fff;
}

.num-glyph {
    font: bold 8px "Open Sans", sans-serif;
    fill: #fff;
}

.filters-head {
    height: 42px;
    display: flex;
    align-items: center;
    justify-content: space-between;
    padding: 0 10px 2px;
}

.dut {
    padding: 12px 0 0 8px;
}

.scrollbar {
    width: 17px;
    background: #f0f0f0;
    display: flex;
    flex-direction: column;
}

.top-pane .thumb { height: 431px; }

.verify-pane .scrollbar { margin-right: 1px; }

.thumb {
    height: 198px;
    background: #cdcdcd;
}

.sb-end {
    height: 17px;
    display: flex;
    align-items: center;
    justify-content: center;
}

.sb-end.down { margin-top: auto; }

.sb-end::after {
    content: "";
    width: 6px;
    height: 6px;
    border: solid #a0a0a0;
    border-width: 0 1.5px 1.5px 0;
    transform: translateY(-2px) rotate(45deg);
}

.sb-end.up::after {
    transform: translateY(1px) rotate(225deg);
}

.bar {
    height: 25px;
    margin-top: 2px;
    padding: 0 5px 2px 3px;
    display: flex;
    align-items: center;
    justify-content: space-between;
    background: var(--bar);
    flex: none;
}

.bar.dark {
    background: var(--teal);
    margin-top: 1px;
}

.generate-row {
    padding: 6px 0 6px 125px;
}

.generate {
    width: 134px;
    height: 28px;
    display: flex;
    align-items: center;
    border: 2px solid #3c606e;
    border-radius: 2px;
    background: linear-gradient(#c0dcee, #a9cbe2);
    padding: 0 4px;
}

.generate b {
    flex: 1;
    font-size: 13px;
    color: #3d6272;
    letter-spacing: -0.6px;
    margin-left: 6px;
}

.play {
    width: 11px;
    height: 14px;
    background: #274152;
    clip-path: polygon(0 0, 100% 50%, 0 100%);
    flex: none;
}

.track-row {
    height: 21px;
    display: flex;
    align-items: center;
    padding-left: 10px;
}

.levels {
    display: grid;
    grid-template-columns: 50px 141px 141px;
    grid-template-rows: 24px 26px;
    width: 334px;
    height: 52px;
    margin: 0 0 6px 7px;
    border: 1px solid #5b83b0;
    background: #fff;
}

.th {
    line-height: 25px;
    padding-left: 5px;
    border-bottom: 1px solid #ccc;
    border-right: 1px solid #ddd;
    background: linear-gradient(#fff 50%, #f2f3f4 55%);
}

.td {
    display: flex;
    align-items: center;
    padding-left: 2px;
}

.td.name {
    padding-left: 14px;
}

.spin-input {
    width: 119px;
    height: 22px;
    border: 1px solid #acacac;
    background: #fff;
    line-height: 20px;
    display: flex;
    justify-content: space-between;
    padding: 0 6px 0 4px;
}

.spin {
    width: 18px;
    height: 22px;
    display: grid;
    border: 1px solid #3f626e;
    background: #3f626e;
    gap: 1px;
}

.spin i {
    background: #7394a4;
    display: flex;
    align-items: center;
    justify-content: center;
}

.spin i::after {
    content: "";
    width: 8px;
    height: 5px;
    background: #fff;
    clip-path: polygon(0 100%, 50% 0, 100% 100%);
}

.spin i:last-child::after {
    transform: scaleY(-1);
}

.ch-btn {
    width: 16px;
    height: 16px;
    margin-right: 1px;
    border-radius: 2px;
    border: 1px solid #45707e;
    background: linear-gradient(#a3bcca, #4b7686);
    color: #fff;
    font-size: 10px;
    font-weight: 700;
    line-height: 14px;
    text-align: center;
}

.adv-btn {
    width: 137px;
    height: 26px;
    margin-top: 4px;
    line-height: 24px;
    text-align: center;
    background: #ddd;
    border: 1px solid #acacac;
}

/* right panel */
.right-panel {
    flex: 1;
    background: #fff;
}

.big {
    font-size: 36px;
    letter-spacing: 0;
}

.axis-title {
    font-size: 12px;
}

.result-tools {
    height: 26px;
    display: flex;
    align-items: center;
    padding: 0 0 1px 3px;
    border-top: 1px solid #eee;
    background: var(--tools);
}

.result-tools .next { margin-left: 7px; }
.result-tools .sep { margin: 0 3px 0 7px; }

.cmd {
    display: flex;
    align-items: center;
    letter-spacing: 0;
}

.cmd span {
    margin-left: 3px;
    flex: 1;
}

.cmd.add { width: 61px; }
.cmd.delete { width: 74px; }
.cmd.sort { width: 79px; }

.caret {
    width: 5px;
    height: 3px;
    margin-right: 6px;
    background: #000;
    clip-path: polygon(0 0, 100% 0, 50% 100%);
}

.thumbs {
    display: flex;
    gap: 5px;
    padding: 5px 0 0 5px;
    position: relative;
}

.thumb-item {
    width: 119px;
    position: relative;
    display: flex;
    flex-direction: column;
    align-items: center;
    letter-spacing: -0.2px;
}

.frame {
    width: 87px;
    height: 54px;
    border: 2px solid #b4c4cc;
    padding: 1px 4px;
    display: flex;
    justify-content: center;
    background: #fff;
    z-index: 1;
}

.frame svg {
    width: 75px;
    height: 48px;
    border: 1px solid var(--teal);
}

.bits .frame svg { width: 79px; }

.thumb-item span {
    width: 119px;
    height: 17px;
    margin-top: -1px;
    line-height: 18px;
    text-align: center;
}

.selected .frame { border-color: var(--teal); }

.thumb-item.selected span {
    background: var(--teal);
    color: #fff;
}

.warn {
    position: absolute;
    left: 83px;
    top: 34px;
    width: 16px;
    height: 15px;
    z-index: 2;
}

.watermark {
    position: absolute;
    right: 15px;
    bottom: 4px;
    font: 12.5px "Liberation Sans", sans-serif;
    letter-spacing: -0.1px;
    color: #8c8c8c;
}
```
